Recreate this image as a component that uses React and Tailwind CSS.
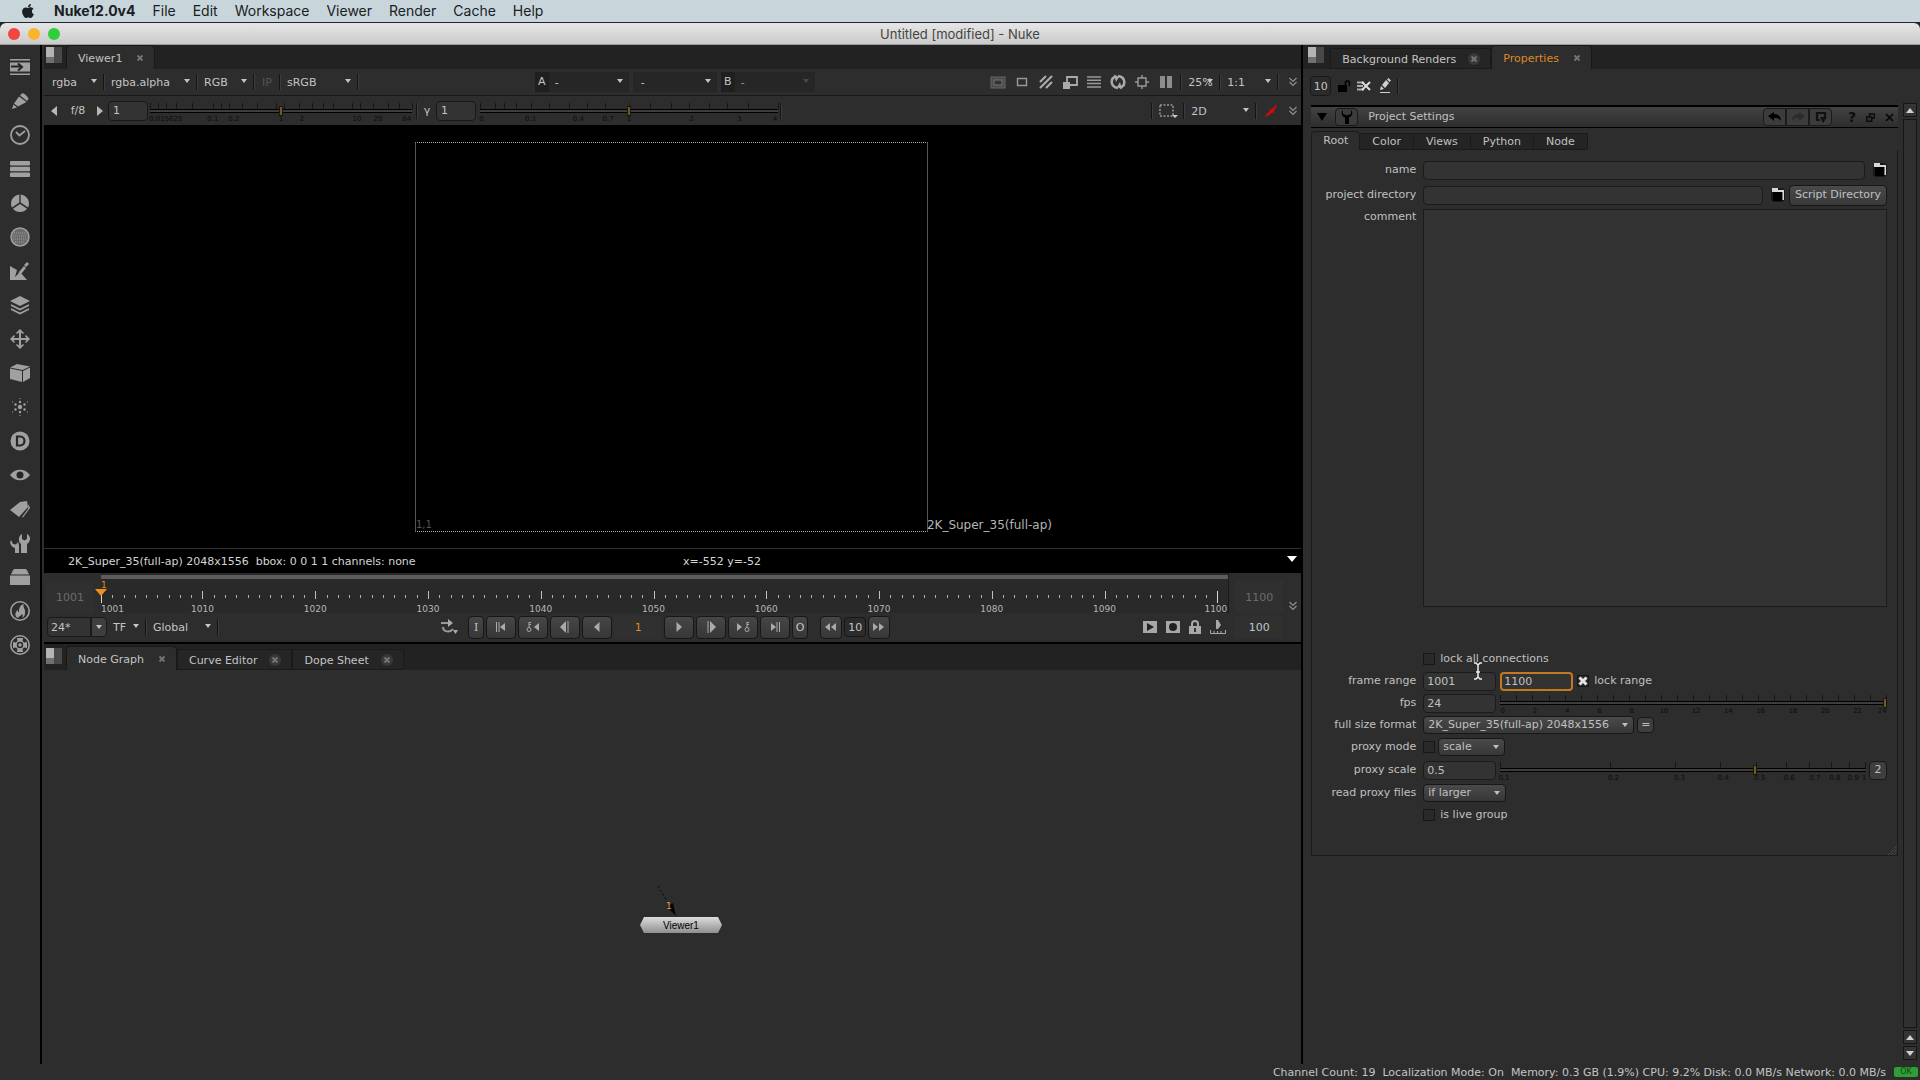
import React from "react";
import { FaApple } from "react-icons/fa";

const MENUS = ["File", "Edit", "Workspace", "Viewer", "Render", "Cache", "Help"];

/* ---------- small shared pieces ---------- */

function Caret({ className = "" }) {
  return (
    <svg viewBox="0 0 6 4" className={`w-1.5 h-1 ${className}`} fill="currentColor">
      <path d="M0 0h6L3 4z" />
    </svg>
  );
}

function Chevrons() {
  return (
    <svg viewBox="0 0 8 10" className="w-2 h-2.5 shrink-0" fill="none" stroke="#8f8f8f" strokeWidth="1.2">
      <path d="M.5 1 4 4.5 7.5 1M.5 5 4 8.5 7.5 5" />
    </svg>
  );
}

function Sep() {
  return <div className="w-px h-4 bg-[#141414] border-r border-[#3c3c3c] box-content shrink-0" />;
}

function PaneIcon() {
  return (
    <svg viewBox="0 0 16 16" className="w-4 h-4 mt-0.5 shrink-0">
      <path d="M0 0h8v10H0z" fill="#b4b4b4" />
      <path d="M8 0h8v16H8z" fill="#484848" />
      <path d="M0 10h8v6H0z" fill="#707070" />
    </svg>
  );
}

function Select({ label, id, value, className = "", boxed = false }) {
  return (
    <div className={`relative shrink-0 ${className}`}>
      <select
        id={id}
        aria-label={label}
        className={
          boxed
            ? "appearance-none w-full h-[18px] pl-1 text-[11px] leading-4 rounded-sm border border-[#171717] bg-linear-to-b from-[#4a4a4a] to-[#373737] outline-none"
            : "appearance-none w-full h-5 pt-0.5 text-[11px] leading-4 bg-transparent outline-none"
        }
      >
        <option>{value}</option>
      </select>
      <Caret className="absolute right-1.5 top-[7px] pointer-events-none" />
    </div>
  );
}

function Tab({ children, active, orange }) {
  return (
    <div
      className={
        active
          ? "flex items-center h-6 pl-[11px] pr-2 gap-3 bg-[#2d2d2d] border border-b-0 border-[#181818] rounded-t-sm"
          : "flex items-center h-[21px] mt-[3px] pl-[11px] pr-2.5 gap-3 bg-[#252525] border border-[#1a1a1a]"
      }
    >
      <button className={orange ? "pt-0.5 text-[#dd8a28]" : "pt-0.5 text-[#c4c4c4]"}>{children}</button>
      <button
        aria-label={`Close ${children}`}
        className={active ? "w-3 h-3" : "w-3 h-3 rounded-full bg-[#383838]"}
      >
        <svg viewBox="0 0 12 12" stroke="#757575" strokeWidth="1.8">
          <path d="m3.5 3.5 5 5m0-5-5 5" />
        </svg>
      </button>
    </div>
  );
}

function Slider({ label, value, labels, ticks, className = "" }) {
  return (
    <div className={`relative h-6 ${className}`}>
      {ticks.map((t) => (
        <span key={t} className="absolute top-1 w-px h-1.5 bg-[#161616]" style={{ left: `${t}%` }} />
      ))}
      <input
        type="range"
        aria-label={label}
        min="0"
        max="100"
        step="any"
        defaultValue={value}
        className="absolute inset-x-0 top-2.5 w-full h-1 appearance-none bg-[#3e3e3e] border-y border-black outline-none [&::-webkit-slider-thumb]:appearance-none [&::-webkit-slider-thumb]:w-1 [&::-webkit-slider-thumb]:h-2.5 [&::-webkit-slider-thumb]:bg-[#6d5b26] [&::-webkit-slider-thumb]:border [&::-webkit-slider-thumb]:border-[#1c1808]"
      />
      {labels.map(([pos, text]) => (
        <span
          key={pos}
          className="absolute top-4 -translate-x-1/2 text-[7px] leading-2 text-[#0c0c0c]"
          style={{ left: `${pos}%` }}
        >
          {text}
        </span>
      ))}
    </div>
  );
}

/* ---------- left tool column ---------- */

const TOOLS = [
  ["Image", <><path d="M0 2h20v1.5H0zM0 16.500h20V18H0z" /><path d="M0 5.500h20v9H0z" /><path d="M1 9.500h10M8 6.500l4 3.500-4 3.500" fill="none" stroke="#222" strokeWidth="2" /></>],
  ["Draw", <><path d="m2 18 1.500-4.500L7 16.500z" /><path d="M4 12.500 9 5.500l7.500 5.500-8.500 4.500z" /><path d="m10 4.500 2.500-2.500C15 3 18 5.500 18.500 8L17 10z" /></>],
  ["Time", <><circle cx="10" cy="10" r="9" fill="none" stroke="currentColor" strokeWidth="1.800" /><path d="m6 7 3.500 3.500L15 6" fill="none" stroke="currentColor" strokeWidth="1.800" /></>],
  ["Channel", <><rect y="2" width="20" height="4.500" rx="1" /><rect y="7.700" width="20" height="4.500" rx="1" /><rect y="13.500" width="20" height="4.500" rx="1" /></>],
  ["Color", <><path d="M9.300 1.500v8L2 14.500A9 9 0 0 1 9.300 1.500zM10.700 1.500v8L18 14.500A9 9 0 0 0 10.700 1.500zM10 11l7 4.800a9.300 9.300 0 0 1-14 0z" /></>],
  ["Filter", <><circle cx="10" cy="10" r="9" fill="#6c6c6c" stroke="currentColor" strokeWidth="1.500" /><path d="M4 6h12M3 9h14M3 12h14M5 15h10" stroke="#999" strokeDasharray="1 1" /></>],
  ["Keyer", <><path d="M0 5v14h17L10 11l-5 5 2-7z" /><path d="m8 14 1-3 5-6 2 2-5 6zM14 4l3-3 2 2-3 3z" /></>],
  ["Merge", <><path d="m10 1 10 5-10 5L0 6z" /><path d="m1 10 9 4.500L19 10M1 14l9 4.500L19 14" fill="none" stroke="currentColor" strokeWidth="1.800" /></>],
  ["Transform", <path d="M10 0 6 4l1 1 2-1.500V9H3.500L5 7 4 6 0 10l4 4 1-1-1.500-2H9v5.500L7 15l-1 1 4 4 4-4-1-1-2 1.500V11h5.500L15 13l1 1 4-4-4-4-1 1 1.500 2H11V3.500L13 5l1-1z" />],
  ["3D", <path d="M0 4.500 7 1l13 2.500L12.500 7zM0 5.500 12 8v11L0 16zM13 8l7-3.500V15l-7 4z" />],
  ["Particles", <g><circle cx="10" cy="10" r="2.200" /><circle cx="10" cy="5" r="1.200" /><circle cx="10" cy="15" r="1.200" /><circle cx="5.500" cy="7.500" r="1.200" /><circle cx="14.500" cy="7.500" r="1.200" /><circle cx="5.500" cy="12.500" r="1.200" /><circle cx="14.500" cy="12.500" r="1.200" /><path d="M9.500 1h1v1h-1zM9.500 18h1v1h-1zM2 4.500h1v1H2zM17 4.500h1v1h-1zM2 14.500h1v1H2zM17 14.500h1v1h-1z" /></g>],
  ["Deep", <><circle cx="10" cy="10" r="9.500" /><path d="M7 5.500h3c6 0 6 9 0 9H7z" fill="none" stroke="#262626" strokeWidth="2.200" /></>],
  ["Views", <><path d="M0 10c5-7 15-7 20 0-5 7-15 7-20 0z" /><circle cx="10" cy="10" r="3.500" fill="#262626" /></>],
  ["MetaData", <><path d="m0 11 10-8 7-1 1 6-9 10z" /><path d="m12 18 6-8 .5-5 1.500 4-7 9.500z" /></>],
  ["ToolSets", <><path d="M11 20V11C8 9 8 3 12 1v5l2.500 1.500L17 6V1c4 2 4 7 0 10v9z" /><path d="M5 20v-5c-4-1-6-5-4-8l2 4 3 .5L8 9c1 2 1 4 1 5v6z" /></>],
  ["Other", <path d="m3 3 1.500-1h11L17 3l2 4.500H1zM0 8.500h20V18H0z" />],
  ["FurnaceCore", <><circle cx="10" cy="10" r="9.200" fill="none" stroke="currentColor" strokeWidth="1.600" /><path d="M8 17c-4-2-3-6 0-8 0 2 0 2 1 2 0-4 1-7 5-8-2 3 2 5 1 9 0 2-1 4-3 5 1-2 1-3 0-4-1 2-3 2-4 4z" /></>],
  ["AIR", <><circle cx="10" cy="10" r="9.200" fill="none" stroke="currentColor" strokeWidth="1.600" /><path d="M7 3h6l-.5 3 1.500 1.500 3-.5v6l-3-.5-1.500 1.500.5 3H7l.5-3L6 12.500l-3 .5V7l3 .5L7.500 6z" /><circle cx="10" cy="10" r="3.200" fill="#262626" /><circle cx="10" cy="10" r="1.800" /></>],
];

function ToolColumn() {
  return (
    <nav className="w-[42px] shrink-0 pt-[5px] border-r-2 border-black flex flex-col items-center text-[#a0a0a0]">
      {TOOLS.map(([name, art]) => (
        <button key={name} aria-label={name} className="h-[34px] w-full flex items-center justify-center">
          <svg viewBox="0 0 20 20" className="w-5 h-5" fill="currentColor">{art}</svg>
        </button>
      ))}
    </nav>
  );
}

/* ---------- viewer ---------- */

const VIEW_ICONS = [
  ["Mask", <><rect x="1" y="3" width="14" height="11" fill="#4a4a4a" stroke="#666" strokeWidth="1" /><rect x="4" y="6" width="8" height="5" fill="#333" stroke="#777" strokeWidth="1" /></>],
  ["Gui mode", <path d="M3 4.500h10M3 11.500h10M3.500 4v8M12.500 4v8" fill="none" stroke="#999" strokeWidth="1.400" />],
  ["Zebra", <path d="M2 8 8 2M2 14 14 2M8 14l6-6" stroke="#aaa" strokeWidth="2.200" />],
  ["Proxy", <><path d="M5 9V3h10v8H8" fill="none" stroke="#aaa" strokeWidth="1.800" /><path d="M1 8h7v7H1z" fill="#aaa" /></>],
  ["Scanlines", <path d="M1 3h14M1 6.300h14M1 9.600h14M1 13h14" stroke="#999" strokeWidth="1.500" />],
  ["Refresh", <><path d="M8 14C0 13 0 4 6 2.500M8 2c8 1 8 10 2 11.500" fill="none" stroke="#aaa" strokeWidth="2.500" /><path d="M4 .5 9 3 6 8zM12 15.500 7 13l3-5z" fill="#aaa" /></>],
  ["ROI", <path d="M4 4h8v8H4zM8 1v3M8 12v3M1 8h3M12 8h3" fill="none" stroke="#999" strokeWidth="1.400" />],
  ["Pause", <path d="M2 2h5v12H2zM9 2h5v12H9z" fill="#8d8d8d" />],
];

function ViewerToolbar() {
  return (
    <div className="flex items-center justify-between h-[27px] border-b border-[#181818]">
      <div className="flex items-center">
        <Select label="Channel layer" value="rgba" className="w-[59px] pl-2" />
        <Sep />
        <Select label="Alpha channel" value="rgba.alpha" className="w-[91px] pl-1.5" />
        <Sep />
        <Select label="Display channels" value="RGB" className="w-[55px] pl-1.5" />
        <Sep />
        <button className="w-6 pt-0.5 text-[#555]">IP</button>
        <Sep />
        <Select label="Viewer process" value="sRGB" className="w-[76px] pl-1.5" />
        <Sep />
      </div>
      <div className="flex items-center h-5">
        <label htmlFor="inputA" className="w-3.5 h-5 pt-0.5 text-center bg-[#1f1f1f]">A</label>
        <Select id="inputA" value="-" className="w-20 h-5 pl-1.5 bg-[#262626]" />
        <Select label="Wipe operation" value="-" className="w-[84px] h-5 ml-1 pl-2 bg-[#262626]" />
        <label htmlFor="inputB" className="w-3.5 h-5 ml-1 pt-0.5 text-center bg-[#1f1f1f]">B</label>
        <div className="relative w-20 h-5 pl-1.5 bg-[#262626]">
          <select id="inputB" disabled className="appearance-none w-full h-5 pt-0.5 bg-transparent text-[#999]">
            <option>-</option>
          </select>
          <Caret className="absolute right-1.5 top-[7px] text-[#484848]" />
        </div>
      </div>
      <div className="flex items-center">
        <div className="flex gap-2 mr-1.5">
          {VIEW_ICONS.map(([name, art]) => (
            <button key={name} aria-label={name} className="w-4 h-4">
              <svg viewBox="0 0 16 16">{art}</svg>
            </button>
          ))}
        </div>
        <Sep />
        <Select label="Zoom" value="25%" className="w-[37px] pl-1.5" />
        <Sep />
        <Select label="Downrez" value="1:1" className="w-14 pl-1.5" />
        <Sep />
        <button aria-label="More viewer controls" className="pl-2.5 pr-1"><Chevrons /></button>
      </div>
    </div>
  );
}

const GAIN_TICKS = [0, 3, 6, 10, 16, 24, 27, 30, 35, 41, 48, 51, 57, 62, 66, 70, 77, 80, 85, 91, 95, 100];
const GAIN_LABELS = [[6, "0.015625"], [24, "0.1"], [32, "0.2"], [50, "1"], [58, "2"], [79, "10"], [87, "20"], [98, "64"]];
const GAMMA_TICKS = [0, 5, 8, 12, 17, 23, 30, 36, 42, 50, 57, 64, 70, 77, 83, 90, 100];
const GAMMA_LABELS = [[0.5, "0"], [17, "0.1"], [33, "0.4"], [43, "0.7"], [50, "1"], [71, "2"], [87, "3"], [99, "4"]];

function GainToolbar() {
  const field = "w-10 h-5 pl-1 text-[11px] bg-[#333] border border-[#191919] rounded-sm outline-none";
  return (
    <div className="flex items-center justify-between h-[29px]">
      <div className="flex items-center">
        <button aria-label="Previous f-stop" className="w-5 flex justify-center">
          <svg viewBox="0 0 6 10" className="w-1.5 h-2.5" fill="#b8b8b8"><path d="M6 0v10L0 5z" /></svg>
        </button>
        <label htmlFor="gain" className="w-7 text-center">f/8</label>
        <button aria-label="Next f-stop" className="w-4 flex justify-center">
          <svg viewBox="0 0 6 10" className="w-1.5 h-2.5" fill="#b8b8b8"><path d="M0 0v10l6-5z" /></svg>
        </button>
        <input id="gain" defaultValue="1" className={field} />
        <Slider label="Gain" value={50} ticks={GAIN_TICKS} labels={GAIN_LABELS} className="w-[262px] ml-0.5 mr-1" />
        <Sep />
        <label htmlFor="gamma" className="w-[18px] text-center">γ</label>
        <input id="gamma" defaultValue="1" className={field} />
        <Slider label="Gamma" value={50} ticks={GAMMA_TICKS} labels={GAMMA_LABELS} className="w-[298px] ml-1 mr-0.5" />
        <Sep />
      </div>
      <div className="flex items-center">
        <Sep />
        <button aria-label="Region select" className="w-[30px] flex justify-center">
          <svg viewBox="0 0 20 16" className="w-5 h-4">
            <path d="M2 2h13v11H2z" fill="none" stroke="#ccc" strokeDasharray="2 1.500" />
            <path d="M14 12h6l-3 3z" fill="#ccc" />
          </svg>
        </button>
        <Sep />
        <Select label="View mode" value="2D" className="w-[70px] pl-1.5" />
        <Sep />
        <button aria-label="Lock 3D view" className="w-7 flex justify-center">
          <svg viewBox="0 0 14 14" className="w-3.5 h-3.5"><path d="M1 13c1-3 3-5 5-6l-1-2 2 .5L12 1l1 1-3 5 .5 2-2.500-.5C7 10 4 12 1 13z" fill="#c80d0d" /></svg>
        </button>
        <button aria-label="More gain controls" className="px-1"><Chevrons /></button>
      </div>
    </div>
  );
}

function ViewerCanvas() {
  return (
    <div className="relative flex-[424_1_0%] min-h-0 bg-black border-b border-[#2f2f2f] overflow-hidden">
      {/* format frame, free on the canvas */}
      <div className="absolute left-[29.5%] top-[4%] w-[40.8%] h-[92%] border-x border-[#555] border-y border-y-[#aaa] border-dotted [border-left-style:solid] [border-right-style:solid]">
        <span className="absolute left-0 bottom-0 leading-3 text-[10px] text-[#555]">1,1</span>
        <span className="absolute left-full bottom-0 leading-3 text-xs text-[#b4b4b4] whitespace-nowrap">2K_Super_35(full-ap)</span>
      </div>
    </div>
  );
}

function ViewerInfo() {
  return (
    <div className="relative flex items-center h-6 pl-6 pr-1 pt-0.5 bg-black text-[#d5d5d5] whitespace-pre">
      <span className="w-[615px]">2K_Super_35(full-ap) 2048x1556  bbox: 0 0 1 1 channels: none</span>
      <span className="flex-1">x=-552 y=-52</span>
      <svg viewBox="0 0 10 6" className="w-2.5 h-1.5 mb-1.5" fill="#fff"><path d="M0 0h10L5 6z" /></svg>
    </div>
  );
}

/* ---------- timeline ---------- */

const FRAMES = Array.from({ length: 100 }, (_, i) => 1001 + i);

function Timeline() {
  const range = "w-12 h-8 mt-2 text-center text-[11px] text-[#6c6c6c] bg-[#303030] outline-none";
  return (
    <div className="flex items-start h-[41px] pl-0.5">
      <input aria-label="First frame" defaultValue="1001" className={range} />
      <div className="flex-1 h-10 ml-[7px] pt-0.5 bg-[#292929] border-r border-[#1a1a1a]">
        <div className="h-1 bg-[#5c5c5c]" />
        <div className="relative h-[34px] mr-[11px]">
          {FRAMES.map((f, i) => (
            <span
              key={f}
              className={
                f === 1001 || f === 1100
                  ? "absolute top-3 w-px h-3 bg-[#d8d8d8]"
                  : f % 10 === 0
                    ? "absolute top-3 w-px h-2 bg-[#c0c0c0]"
                    : "absolute top-4 w-px h-[3px] bg-[#b0b0b0]"
              }
              style={{ left: `${(i / 99) * 100}%` }}
            />
          ))}
          {FRAMES.filter((f) => f % 10 === 0 && f < 1100).map((f) => (
            <span
              key={f}
              className="absolute top-6 -translate-x-1/2 text-[9px] leading-3 text-[#b8b8b8]"
              style={{ left: `${((f - 1001) / 99) * 100}%` }}
            >
              {f}
            </span>
          ))}
          <span className="absolute left-0 top-6 text-[9px] leading-3 text-[#b8b8b8]">1001</span>
          <span className="absolute -right-2.5 top-6 text-[9px] leading-3 text-[#b8b8b8]">1100</span>
          {/* playhead */}
          <span className="absolute left-0 top-0.5 text-[9px] leading-2 text-[#dd8a28]">1</span>
          <svg viewBox="0 0 12 7" className="absolute -left-1.5 top-2.5 w-3 h-[7px]" fill="#ee8f1e"><path d="M0 0h12L6 7z" /></svg>
        </div>
      </div>
      <input aria-label="Last frame" defaultValue="1100" className={`${range} ml-1.5`} />
      <button aria-label="More timeline controls" className="pl-1.5 pr-1 mt-7"><Chevrons /></button>
    </div>
  );
}

const BACK = [
  ["First frame", <><path d="M4.500 1v10M7 1v10" /><path d="M13 2v8L8 6z" stroke="none" /></>],
  ["Previous keyframe", <><path d="M15 2v8l-5-4z" stroke="none" /><path d="M5 1v5M5 1.500h2M5 3.500h2" /><circle cx="5" cy="8.500" r="2" fill="none" /></>],
  ["Step back", <><path d="M10 0v12L4 6z" stroke="none" /><path d="M12 0v12" /></>],
  ["Play backward", <path d="M11.500 1v10L6 6z" stroke="none" />],
];
const FORWARD = [
  ["Play forward", <path d="M6.500 1v10L12 6z" stroke="none" />],
  ["Step forward", <><path d="M8 0v12l6-6z" stroke="none" /><path d="M6 0v12" /></>],
  ["Next keyframe", <><path d="M3 2v8l5-4z" stroke="none" /><path d="M13 1v5M13 1.500h2M13 3.500h2" /><circle cx="13" cy="8.500" r="2" fill="none" /></>],
  ["Last frame", <><path d="M13.500 1v10M11 1v10" /><path d="M5 2v8l5-4z" stroke="none" /></>],
];

const BTN = "h-[23px] flex items-center justify-center rounded-sm border border-[#171717] bg-linear-to-b from-[#464646] to-[#373737]";

function TransportButtons({ items }) {
  return items.map(([name, art]) => (
    <button key={name} aria-label={name} className={`${BTN} w-[30px]`}>
      <svg viewBox="0 0 18 12" className="w-[18px] h-3" fill="#aaa" stroke="#aaa" strokeWidth="1">
        <g>{art}</g>
      </svg>
    </button>
  ));
}

function Transport() {
  return (
    <div className="flex items-center h-[26px] pl-[3px] pr-3 mb-0.5">
      <div className="flex-1 flex items-center">
        <input aria-label="Frame rate" defaultValue="24*" className="w-11 h-5 pl-[3px] bg-[#333] border border-[#191919] rounded-l-sm text-[11px] outline-none" />
        <button aria-label="Frame rate list" className="w-4 h-5 mr-1 flex items-center justify-center bg-[#3e3e3e] border border-[#191919] rounded-r-sm"><Caret /></button>
        <Select label="Time display" value="TF" className="w-[34px] pl-0.5" />
        <Sep />
        <Select label="Range source" value="Global" className="w-[70px] pl-1.5" />
        <Sep />
      </div>
      <div className="flex items-center gap-0.5">
        <button aria-label="Playback mode" className="w-[18px] mr-2">
          <svg viewBox="0 0 18 16" className="w-[18px] h-4" fill="none" stroke="#999" strokeWidth="2">
            <path d="M1 4h8M3 8c0 5 7 6 10 2" />
            <path d="M8 0v8l5-4zM13 11h5l-2.500 4z" fill="#aaa" stroke="none" />
          </svg>
        </button>
        <button className={`${BTN} w-4 pt-0.5 font-['DejaVu_Serif',serif]`}>I</button>
        <TransportButtons items={BACK} />
        <input aria-label="Current frame" defaultValue="1" className="w-12 h-[23px] text-center text-[11px] text-[#dd8a28] bg-[#303030] outline-none" />
        <TransportButtons items={FORWARD} />
        <button className={`${BTN} w-4 pt-0.5`}>O</button>
        <button aria-label="Jump back" className={`${BTN} w-[22px] ml-2.5`}>
          <svg viewBox="0 0 12 8" className="w-3 h-2" fill="#aaa"><path d="M5 0v8L0 4zM11 0v8L6 4z" /></svg>
        </button>
        <input aria-label="Frame increment" defaultValue="10" className="w-[22px] h-5 text-center text-[11px] bg-[#2b2b2b] border border-[#171717] rounded-sm outline-none" />
        <button aria-label="Jump forward" className={`${BTN} w-[22px]`}>
          <svg viewBox="0 0 12 8" className="w-3 h-2" fill="#aaa"><path d="M0 0v8l5-4zM6 0v8l5-4z" /></svg>
        </button>
      </div>
      <div className="flex-1 flex items-center justify-end gap-[9px] pr-1.5">
        <button aria-label="Flipbook">
          <svg viewBox="0 0 14 12" className="w-3.5 h-3"><path d="M0 0h14v12H0z" fill="#a8a8a8" /><path d="M4 2v8l7-4z" fill="#222" /></svg>
        </button>
        <button aria-label="Capture">
          <svg viewBox="0 0 14 12" className="w-3.5 h-3"><path d="M0 0h14v12H0z" fill="#a8a8a8" /><circle cx="7" cy="6" r="4" fill="#222" /></svg>
        </button>
        <button aria-label="Lock playback">
          <svg viewBox="0 0 12 14" className="w-3 h-3.5"><path d="M0 6h12v8H0z" fill="#a8a8a8" /><path d="M3 6V4a3 3 0 0 1 6 0v2" fill="none" stroke="#a8a8a8" strokeWidth="2" /><path d="M5 8h2v4H5z" fill="#333" /></svg>
        </button>
        <button aria-label="In and out points">
          <svg viewBox="0 0 16 14" className="w-4 h-3.5" fill="#a8a8a8"><path d="M6 0h2l3 5-3 4H6z" /><path d="M.5 10v3.500h15V10M4 11v2M7.500 11v2M11 11v2" fill="none" stroke="#a8a8a8" /></svg>
        </button>
        <input aria-label="Frame count" defaultValue="100" className="w-12 h-[22px] text-center text-[11px] bg-[#303030] outline-none" />
      </div>
    </div>
  );
}

/* ---------- node graph ---------- */

function NodeGraph() {
  return (
    <div className="relative flex-[394_1_0%] min-h-0">
      <div className="absolute left-[47.4%] top-[54.700%]">
        <svg viewBox="0 0 82 48" className="w-[82px] h-12">
          <defs>
            <linearGradient id="nodeFill" x1="0" y1="0" x2="0" y2="1">
              <stop offset="0" stopColor="#dcdcdc" />
              <stop offset="1" stopColor="#8f8f8f" />
            </linearGradient>
          </defs>
          <path d="m18 0 14 24" stroke="#080808" strokeDasharray="2 2.500" />
          <path d="m27 21 6-4 3 13z" fill="#050505" />
          <path d="M4 31h74l4 8-4 8H4l-4-8z" fill="url(#nodeFill)" />
        </svg>
        <span className="absolute left-[26px] top-3.5 text-[9px] leading-3 text-[#e0a45c]">1</span>
        <span className="absolute inset-x-0 bottom-0.5 text-center text-[10px] leading-3 text-black font-['Liberation_Sans',sans-serif]">Viewer1</span>
      </div>
    </div>
  );
}

/* ---------- properties ---------- */

const FIELD = "h-[19px] pl-[3px] text-[11px] bg-[#333] border border-[#1b1b1b] rounded-sm outline-none";
const CHECK = "appearance-none w-3 h-3 bg-[#292929] border border-[#171717]";

function Row({ label, htmlFor, children, className = "h-[22px]" }) {
  return (
    <div className={`flex items-center pr-2.5 ${className}`}>
      <label htmlFor={htmlFor} className="w-[104px] mr-[7px] shrink-0 text-right">{label}</label>
      {children}
    </div>
  );
}

function FolderButton({ label }) {
  return (
    <button aria-label={label} className="w-3.5 h-3.5 shrink-0 bg-[#191919] rounded-sm">
      <svg viewBox="0 0 14 14"><path d="M1 0h6v2h6v10h-1.500V4H1z" fill="#d8d8d8" /><path d="M2 4h9v9H2z" fill="#000" /></svg>
    </button>
  );
}

const FPS_LABELS = [0, 2, 4, 6, 8, 10, 12, 14, 16, 18, 20, 22, 24].map((n) => [n === 24 ? 98.8 : 0.6 + n * 4.17, n]);
const FPS_TICKS = Array.from({ length: 25 }, (_, n) => n * 4.16);
const SCALE_LABELS = [[1, "0.1"], [31, "0.2"], [49, "0.3"], [61, "0.4"], [71, "0.5"], [79, "0.6"], [86, "0.7"], [91.500, "0.8"], [96.500, "0.9"], [99.500, "1"]];
const SCALE_TICKS = [0, 30, 47.700, 60, 70, 78, 84.500, 90.300, 95.400, 99.800];

function ProjectSettings() {
  const head = "w-[23px] h-[18px] flex items-center justify-center border border-[#1b1b1b] bg-[#3c3c3c]";
  return (
    <section className="flex-1 min-w-0 text-[#c0c0c0]">
      <header className="flex items-center h-[23px] mt-0.5 pl-1.5 pr-1 border-t-2 border-t-black border-b border-b-black bg-linear-to-b from-[#424242] to-[#2e2e2e]">
        <button aria-label="Collapse" className="w-2.5 mr-2">
          <svg viewBox="0 0 10 8" className="w-2.5 h-2"><path d="M0 0h10L5 8z" /></svg>
        </button>
        <button aria-label="Tools" className={`${head} rounded-sm mr-2.5`}>
          <svg viewBox="0 0 12 14" className="w-3 h-3.5"><path d="M2 0C0 2 0 6 4 7.500V14h4V7.500C12 6 12 2 10 0v4L6 5.500 2 4z" /></svg>
        </button>
        <h2 className="flex-1">Project Settings</h2>
        <button aria-label="Undo" className={`${head} rounded-l-sm`}>
          <svg viewBox="0 0 14 10" className="w-3.5 h-2.5"><path d="m0 4 6-4v2c5 0 7 3 7 7-2-3-4-3-7-3v3z" /></svg>
        </button>
        <button aria-label="Redo" className={head}>
          <svg viewBox="0 0 14 10" className="w-3.5 h-2.5" fill="#2c2c2c"><path d="M14 4 8 0v2C3 2 1 5 1 9c2-3 4-3 7-3v3z" /></svg>
        </button>
        <button aria-label="Revert" className={`${head} rounded-r-sm mr-3`}>
          <svg viewBox="0 0 12 12" className="w-3 h-3"><path d="M5 9H2V2h8v4" fill="none" stroke="#111" strokeWidth="2.200" /><path d="M5 6h7l-4 6z" fill="#111" /></svg>
        </button>
        <button aria-label="Help" className="w-4 mr-1.5 text-sm leading-4 font-bold text-[#0c0c0c]">?</button>
        <button aria-label="Float" className="mr-2.5">
          <svg viewBox="0 0 9 9" className="w-[9px] h-[9px]" fill="none" stroke="#0a0a0a" strokeWidth="1.500"><path d="M3.500 3V1h5v4h-2M.7 4h5v4.300h-5z" /></svg>
        </button>
        <button aria-label="Close panel">
          <svg viewBox="0 0 9 9" className="w-[9px] h-[9px]" stroke="#050505" strokeWidth="1.700"><path d="m1 1 7 7m0-7L1 8" /></svg>
        </button>
      </header>

      <div className="flex items-end h-[22px]">
        <button className="h-[19px] px-[11px] bg-[#2d2d2d] border border-b-0 border-[#1b1b1b] rounded-t-sm">Root</button>
        {["Color", "Views", "Python", "Node"].map((t) => (
          <button key={t} className="h-[17px] px-3 bg-[#242424] border border-l-0 border-[#1b1b1b]">{t}</button>
        ))}
      </div>

      <div className="relative pt-2 pb-[29px] border border-t-0 border-[#1b1b1b]">
        <Row label="name" htmlFor="name" className="h-6">
          <input id="name" className={`${FIELD} flex-1 mr-2`} />
          <FolderButton label="Browse name" />
        </Row>
        <Row label="project directory" htmlFor="dir" className="h-[26px]">
          <input id="dir" className={`${FIELD} flex-1 mr-2`} />
          <FolderButton label="Browse project directory" />
          <button className="h-[21px] w-[98px] ml-1 rounded-sm border border-[#171717] bg-linear-to-b from-[#4a4a4a] to-[#393939]">Script Directory</button>
        </Row>
        <div className="flex items-start pt-px pr-2.5">
          <label htmlFor="comment" className="w-[104px] mr-[7px] shrink-0 text-right">comment</label>
          <textarea id="comment" className="flex-1 h-[398px] resize-none bg-[#333] border border-[#1b1b1b] outline-none" />
        </div>

        <div className="h-[41px]" />

        <Row>
          <input id="lockAll" type="checkbox" className={CHECK} />
          <label htmlFor="lockAll" className="ml-[5px]">lock all connections</label>
        </Row>
        <Row label="frame range" htmlFor="first">
          <input id="first" defaultValue="1001" className={`${FIELD} w-[73px] mr-1`} />
          <input aria-label="last frame" defaultValue="1100" className="w-[73px] h-[19px] pl-0.5 mr-1 text-[11px] bg-[#333] border-2 border-[#c27a22] rounded-sm outline-none" />
          <span className="relative flex">
            <input id="lockRange" type="checkbox" defaultChecked className={CHECK} />
            <svg viewBox="0 0 12 12" className="absolute inset-0 w-3 h-3 pointer-events-none" stroke="#e4e4e4" strokeWidth="3"><path d="m2.500 2.500 7 7m0-7-7 7" /></svg>
          </span>
          <label htmlFor="lockRange" className="ml-[5px]">lock range</label>
        </Row>
        <Row label="fps" htmlFor="fps">
          <input id="fps" defaultValue="24" className={`${FIELD} w-[73px] mr-1`} />
          <Slider label="fps slider" value={100} ticks={FPS_TICKS} labels={FPS_LABELS} className="flex-1" />
        </Row>
        <Row label="full size format" htmlFor="format">
          <Select id="format" boxed value="2K_Super_35(full-ap) 2048x1556" className="w-[211px] mr-[3px]" />
          <button className="w-[17px] h-4 leading-3 rounded-sm border border-[#171717] bg-[#3e3e3e]">=</button>
        </Row>
        <Row label="proxy mode" htmlFor="proxyMode">
          <input type="checkbox" aria-label="use proxy" className={`${CHECK} mr-[3px]`} />
          <Select id="proxyMode" boxed value="scale" className="w-[67px]" />
        </Row>
        <Row label="proxy scale" htmlFor="proxyScale" className="h-6">
          <input id="proxyScale" defaultValue="0.5" className={`${FIELD} w-[73px] mr-1`} />
          <Slider label="proxy scale slider" value={70} ticks={SCALE_TICKS} labels={SCALE_LABELS} className="flex-1 mr-[3px]" />
          <button className="w-[18px] h-[19px] rounded-sm border border-[#171717] bg-[#3e3e3e]">2</button>
        </Row>
        <Row label="read proxy files" htmlFor="readProxy">
          <Select id="readProxy" boxed value="if larger" className="w-[83px]" />
        </Row>
        <Row>
          <input id="live" type="checkbox" className={CHECK} />
          <label htmlFor="live" className="ml-[5px]">is live group</label>
        </Row>

        {/* resize grip */}
        <svg viewBox="0 0 10 10" className="absolute right-0 bottom-0 w-2.5 h-2.5" stroke="#5a5a5a" strokeDasharray="1 1"><path d="m1 10 9-9M4 10l6-6M7 10l3-3" /></svg>
        {/* text cursor */}
        <svg viewBox="0 0 8 18" className="absolute left-[162px] top-[512px] w-2 h-[18px]" fill="none" stroke="#eee" strokeWidth="1.500"><path d="M0 1h2l2 2 2-2h2M4 3v12M0 17h2l2-2 2 2h2M2 10h4" /></svg>
      </div>
    </section>
  );
}

function ScrollButton({ label, down }) {
  return (
    <button aria-label={label} className="w-3.5 h-3.5 flex items-center justify-center border border-[#161616] bg-[#343434]">
      <svg viewBox="0 0 8 5" className="w-2 h-[5px]" fill="#d0d0d0"><path d={down ? "M0 0h8L4 5z" : "M0 5h8L4 0z"} /></svg>
    </button>
  );
}

function PropertiesPane() {
  return (
    <aside className="flex-[618_1_0%] min-w-0 flex flex-col">
      <div className="flex items-start gap-1.5 h-6 pl-[5px] bg-[#222]">
        <PaneIcon />
        <div className="flex">
          <Tab>Background Renders</Tab>
          <Tab active orange>Properties</Tab>
        </div>
      </div>
      <div className="flex items-center h-[34px] pl-[7px]">
        <input aria-label="Max panels" defaultValue="10" className="w-[21px] h-5 mr-1.5 text-center text-[11px] bg-[#2b2b2b] border border-[#191919] rounded-sm outline-none" />
        <button aria-label="Lock panels" className="mr-1.5">
          <svg viewBox="0 0 14 12" className="w-3.5 h-3"><path d="M1 5h9v7H1z" /><path d="M8.500 5V3a2 2 0 0 1 4 0v3" fill="none" stroke="#000" strokeWidth="1.600" /></svg>
        </button>
        <button aria-label="Clear panels" className="mr-2">
          <svg viewBox="0 0 14 10" className="w-3.5 h-2.5"><path d="M0 1.500h7M0 5h6M0 8.500h7" stroke="#aaa" strokeWidth="2" /><path d="m5 1 8 8m0-8L5 9" stroke="#ddd" strokeWidth="2" /></svg>
        </button>
        <button aria-label="Edit interface" className="mr-1.5">
          <svg viewBox="0 0 12 16" className="w-3 h-4" fill="#d0d0d0"><path d="m1 12 1-4 3 3zM3 7l4-5 3 3-4 5zM8 1.500 9.500 0 12 2.500 10.500 4zM1 14h10v1H1z" /></svg>
        </button>
        <Sep />
      </div>
      <div className="flex-1 flex pl-2 min-h-0">
        <ProjectSettings />
        <div className="flex flex-col items-center gap-[2px] w-[22px] pl-0.5 pb-1">
          <ScrollButton label="Scroll up" />
          <div className="flex-1 w-3.5 border border-[#161616] bg-[#303030]" />
          <ScrollButton label="Page up" />
          <ScrollButton label="Page down" down />
        </div>
      </div>
    </aside>
  );
}

/* ---------- page ---------- */

export default function App() {
  return (
    <div className="flex flex-col h-screen min-h-[900px] bg-[#2d2d2d] text-[#c4c4c4] text-[11px] leading-4 font-['DejaVu_Sans',sans-serif] overflow-hidden">
      <div className="flex items-center gap-[17px] h-[22px] pl-[19px] bg-[#c8d6dc] text-[#182023] text-sm font-['Inter',sans-serif]">
        <FaApple className="w-[18px] h-4" />
        <button className="font-bold">Nuke12.0v4</button>
        {MENUS.map((m) => (
          <button key={m}>{m}</button>
        ))}
      </div>
      <div className="bg-[#20262b] pt-px">
        <div className="relative flex items-center h-[22px] pl-2 gap-2 rounded-t-md bg-linear-to-b from-[#e6e6e6] to-[#cbcbcb] border-b border-[#9c9c9c]">
          <button aria-label="Close" className="w-3 h-3 rounded-full bg-[#f2453f]" />
          <button aria-label="Minimize" className="w-3 h-3 rounded-full bg-[#f8b42c]" />
          <button aria-label="Zoom window" className="w-3 h-3 rounded-full bg-[#2fcf3c]" />
          <h1 className="absolute inset-x-0 text-center text-[13px] text-[#444] font-['Inter',sans-serif]">Untitled [modified] - Nuke</h1>
        </div>
      </div>

      <div className="flex-1 flex min-h-0">
        <ToolColumn />
        <main className="flex-[1260_1_0%] min-w-0 pl-0.5 flex flex-col border-r-2 border-black">
          <div className="flex items-start gap-1 h-6 pl-0.5 bg-[#222]">
            <PaneIcon />
            <Tab active>Viewer1</Tab>
          </div>
          <ViewerToolbar />
          <GainToolbar />
          <ViewerCanvas />
          <ViewerInfo />
          <Timeline />
          <Transport />
          <div className="flex items-start gap-1 h-7 pt-0.5 pl-0.5 border-t-2 border-black bg-[#222]">
            <PaneIcon />
            <div className="flex">
              <Tab active>Node Graph</Tab>
              <Tab>Curve Editor</Tab>
              <Tab>Dope Sheet</Tab>
            </div>
          </div>
          <NodeGraph />
        </main>
        <PropertiesPane />
      </div>

      <footer className="flex items-center justify-end h-4 pr-0.5 whitespace-pre">
        <span className="pt-0.5">Channel Count: 19  Localization Mode: On  Memory: 0.3 GB (1.9%) CPU: 9.2% Disk: 0.0 MB/s Network: 0.0 MB/s</span>
        <span className="w-6 h-2.5 ml-2 text-center text-[8px] leading-[10px] rounded-xs bg-[#2f9e33] text-[#0f4a12]">OK</span>
      </footer>
    </div>
  );
}
